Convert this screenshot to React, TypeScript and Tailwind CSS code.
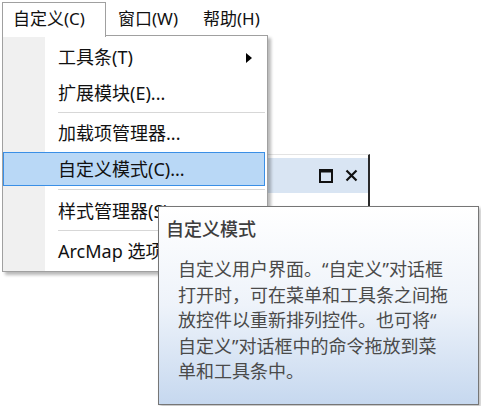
import React from 'react';

type Row = { type: 'item'; label: string; arrow?: boolean; active?: boolean } | { type: 'sep'; h: string };

const rows: Row[] = [
  { type: 'item', label: '工具条(T)', arrow: true },
  { type: 'item', label: '扩展模块(E)...' },
  { type: 'sep', h: 'h-[4px]' },
  { type: 'item', label: '加载项管理器...' },
  { type: 'item', label: '自定义模式(C)...', active: true },
  { type: 'sep', h: 'h-[6px]' },
  { type: 'item', label: '样式管理器(S)...' },
  { type: 'sep', h: 'h-[4px]' },
  { type: 'item', label: 'ArcMap 选项...' },
];

const tipLines = [
  '自定义用户界面。“自定义”对话框',
  '打开时，可在菜单和工具条之间拖',
  '放控件以重新排列控件。也可将“',
  '自定义”对话框中的命令拖放到菜',
  '单和工具条中。',
];

export default function App() {
  return (
    <div className="relative w-[481px] h-[406px] overflow-hidden bg-white font-['Noto_Sans','Noto_Sans_CJK_SC',sans-serif] text-[#111]">
      {/* Menu bar */}
      <div className="flex items-start h-[36px] pl-[2px] pt-[2px] text-[17px]">
        <div className="relative z-30 w-[104px] h-[35px] border-l border-t border-r border-[#a0a0a0] bg-white pl-[10px] pt-[4px] leading-[24px]">
          自定义(C)
        </div>
        <div className="ml-[12px] pt-[5px] leading-[24px]">窗口(W)</div>
        <div className="ml-[25px] pt-[5px] leading-[24px]">帮助(H)</div>
      </div>

      {/* Panel behind the menu */}
      <div className="absolute z-0 left-[120px] top-[154px] w-[250px] h-[52px] border-t border-[#e3e3e3] border-r-2 border-r-[#2a2a2a] bg-white">
        <div className="mt-[3px] h-[35px] bg-[#d9e5f3] flex items-center justify-end gap-[12px] pr-[10px]">
          <svg width="14" height="14" viewBox="0 0 14 14">
            <rect x="1" y="1" width="12" height="12" fill="none" stroke="#111" strokeWidth="2" />
            <line x1="1" y1="2.5" x2="13" y2="2.5" stroke="#111" strokeWidth="2" />
          </svg>
          <svg width="13" height="13" viewBox="0 0 13 13">
            <path d="M1.5 1.5 L11.5 11.5 M11.5 1.5 L1.5 11.5" stroke="#111" strokeWidth="2.2" />
          </svg>
        </div>
      </div>

      {/* Dropdown */}
      <div className="absolute z-20 left-[2px] top-[35px] w-[266px] border border-[#a0a0a0] bg-[linear-gradient(to_right,#f0f0f0_42px,#ffffff_42px)] shadow-[3px_3px_3px_rgba(0,0,0,0.28)] pt-[4px] pb-[1px] text-[18px]">
        <div className="flex flex-col">
          {rows.map((r, i) =>
            r.type === 'sep' ? (
              <div key={i} className={`${r.h} flex items-center -mt-[2px] mb-[2px] ml-[55px] mr-[2px]`}>
                <div className="h-px w-full bg-[#d7d7d7]" />
              </div>
            ) : (
              <div
                key={i}
                className={`relative flex items-center h-[34px] mb-[2px] mr-[2px] pl-[54px] leading-none ${
                  r.active ? 'bg-[#b9d8f6] border border-[#3a8fe6]' : 'border border-transparent'
                }`}
              >
                <span>{r.label}</span>
                {r.arrow && (
                  <svg className="absolute right-[12px] top-[12px]" width="6" height="10" viewBox="0 0 6 10">
                    <polygon points="0,0 6,5 0,10" fill="#000" />
                  </svg>
                )}
              </div>
            )
          )}
        </div>
      </div>

      {/* Tooltip */}
      <div className="absolute z-40 left-[158px] top-[206px] w-[321px] h-[199px] border border-[#767676] bg-gradient-to-b from-white via-[#eef3fa] to-[#c6d8ef] shadow-[2px_2px_3px_rgba(0,0,0,0.25)] text-[#4a4a4a]">
        <div className="pl-[7px] pt-[10px] text-[18px] leading-[24px] font-medium text-[#3e3e3e]">自定义模式</div>
        <div className="pl-[19px] pt-[16px] text-[18px] leading-[25.5px]">
          {tipLines.map((l, i) => (
            <div key={i} className="whitespace-nowrap">{l}</div>
          ))}
        </div>
      </div>
    </div>
  );
}
